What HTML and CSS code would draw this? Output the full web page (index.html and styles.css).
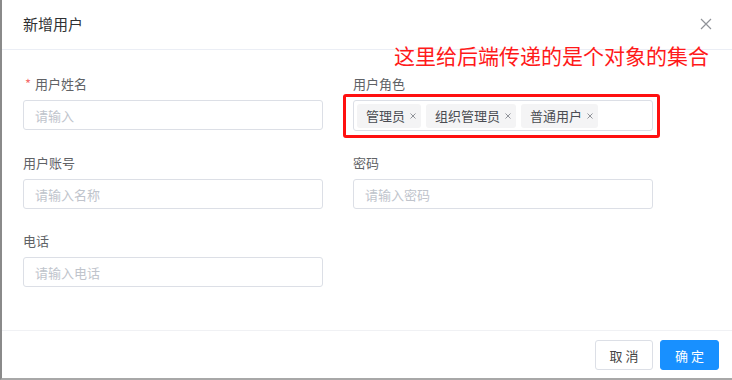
FILE: index.html
```html
<!DOCTYPE html>
<html lang="zh-CN">
<head>
<meta charset="utf-8">
<title>新增用户</title>
<link rel="stylesheet" href="styles.css">
</head>
<body>
<div class="frame">
  <div class="dialog">
    <header class="dialog-header">
      <span class="dialog-title">新增用户</span>
      <svg class="close" width="12" height="12" viewBox="0 0 12 12"><path d="M1 1L11 11M11 1L1 11" stroke="#909399" stroke-width="1.2" fill="none"/></svg>
    </header>
    <div class="dialog-body">
      <div class="form-grid">
        <div class="field">
          <label class="label"><span class="req">*</span>用户姓名</label>
          <div class="input"><span class="ph">请输入</span></div>
        </div>
        <div class="field">
          <label class="label">用户角色</label>
          <div class="input tags-input">
            <span class="tag">管理员<svg class="tag-x" width="6" height="6" viewBox="0 0 6 6"><path d="M0.5 0.5L5.5 5.5M5.5 0.5L0.5 5.5" stroke="#909399" stroke-width="1" fill="none"/></svg></span>
            <span class="tag">组织管理员<svg class="tag-x" width="6" height="6" viewBox="0 0 6 6"><path d="M0.5 0.5L5.5 5.5M5.5 0.5L0.5 5.5" stroke="#909399" stroke-width="1" fill="none"/></svg></span>
            <span class="tag">普通用户<svg class="tag-x" width="6" height="6" viewBox="0 0 6 6"><path d="M0.5 0.5L5.5 5.5M5.5 0.5L0.5 5.5" stroke="#909399" stroke-width="1" fill="none"/></svg></span>
          </div>
        </div>
        <div class="field">
          <label class="label">用户账号</label>
          <div class="input"><span class="ph">请输入名称</span></div>
        </div>
        <div class="field">
          <label class="label">密码</label>
          <div class="input"><span class="ph">请输入密码</span></div>
        </div>
        <div class="field">
          <label class="label">电话</label>
          <div class="input"><span class="ph">请输入电话</span></div>
        </div>
      </div>
    </div>
    <footer class="dialog-footer">
      <button class="btn">取 消</button>
      <button class="btn primary">确 定</button>
    </footer>
    <div class="note">这里给后端传递的是个对象的集合</div>
    <div class="note-box"></div>
  </div>
</div>
</body>
</html>
```
FILE: styles.css
```css
* { box-sizing: border-box; }
html, body { margin: 0; padding: 0; background: #fff; }
body {
  font-family: "Noto Sans CJK SC", "Noto Sans", sans-serif;
  width: 732px;
  height: 380px;
  overflow: hidden;
}
.frame {
  width: 732px;
  height: 380px;
  border-left: 2px solid #8a8a8a;
  border-bottom: 2px solid #a8a8a8;
}
.dialog {
  position: relative;
  height: 100%;
  display: flex;
  flex-direction: column;
}
.dialog-header {
  height: 50px;
  padding: 0 20px 0 21px;
  display: flex;
  align-items: center;
  justify-content: space-between;
  border-bottom: 1px solid #ebeef5;
}
.dialog-title {
  font-size: 15px;
  color: #303133;
  line-height: 20px;
  margin-top: -2px;
}
.close { margin-top: -1px; }
.dialog-body {
  flex: 1;
  padding: 24px 0 0 21px;
}
.form-grid {
  display: grid;
  grid-template-columns: 300px 300px;
  column-gap: 30px;
  row-gap: 22px;
}
.field { display: flex; flex-direction: column; gap: 6px; }
.label {
  font-size: 13px;
  line-height: 20px;
  color: #606266;
}
.req { color: #f56c6c; margin-right: 4px; margin-left: 2px; }
.input {
  height: 30px;
  border: 1px solid #dcdfe6;
  border-radius: 3px;
  padding: 0 11px;
  display: flex;
  align-items: center;
  font-size: 13px;
}
.ph { color: #c0c4cc; }
.tags-input {
  height: 31px;
  padding: 0 3px;
  gap: 5px;
}
.tag {
  height: 24px;
  display: inline-flex;
  align-items: center;
  padding: 0 5px 0 9px;
  background: #f4f4f5;
  border-radius: 3px;
  color: #4a4c52;
  font-size: 13px;
}
.tag-x { margin-left: 5px; margin-top: 1px; }
.dialog-footer {
  height: 48px;
  border-top: 1px solid #f0f1f4;
  display: flex;
  justify-content: flex-end;
  align-items: flex-start;
  gap: 7px;
  padding: 9px 13px 0 0;
}
.btn {
  height: 30px;
  width: 58px;
  border: 1px solid #dcdfe6;
  border-radius: 3px;
  background: #fff;
  color: #444;
  font-family: inherit;
  font-size: 13px;
  padding: 0;
  white-space: pre;
}
.btn.primary {
  width: 59px;
  background: #1890ff;
  border-color: #1890ff;
  color: #fff;
}
.note {
  position: absolute;
  left: 392px;
  top: 41px;
  font-size: 21px;
  line-height: 28px;
  color: #ff1a1a;
  white-space: nowrap;
}
.note-box {
  position: absolute;
  left: 341px;
  top: 94px;
  width: 317px;
  height: 44px;
  border: 3px solid #ff1010;
  border-radius: 3px;
}
```
